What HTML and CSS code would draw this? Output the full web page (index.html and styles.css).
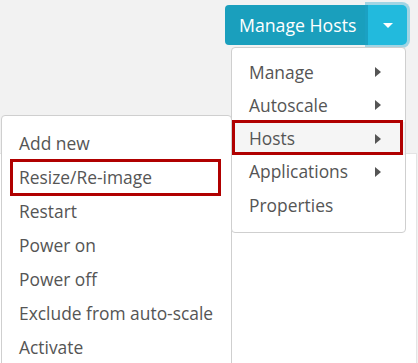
FILE: index.html
```html
<!DOCTYPE html>
<html>
<head>
<meta charset="utf-8">
<link rel="stylesheet" href="styles.css">
</head>
<body>
<div class="page">
  <div class="toolbar">
    <div class="btn-group">
      <button class="btn-main">Manage Hosts</button>
      <button class="btn-caret"><span class="caret"></span></button>
      <ul class="menu menu-main">
        <li class="item has-sub"><span>Manage</span><span class="arrow"></span></li>
        <li class="item has-sub"><span>Autoscale</span><span class="arrow"></span></li>
        <li class="item has-sub active marked"><span>Hosts</span><span class="arrow"></span></li>
        <li class="item has-sub"><span>Applications</span><span class="arrow"></span></li>
        <li class="item"><span>Properties</span></li>
      </ul>
    </div>
  </div>
  <div class="panel"></div>
  <ul class="menu menu-sub">
    <li class="item">Add new</li>
    <li class="item marked">Resize/Re-image</li>
    <li class="item">Restart</li>
    <li class="item">Power on</li>
    <li class="item">Power off</li>
    <li class="item">Exclude from auto-scale</li>
    <li class="item">Activate</li>
  </ul>
</div>
</body>
</html>
```

FILE: styles.css
```css
html, body {
  margin: 0;
  padding: 0;
}
body {
  background: #f2f2f2;
  font-family: "Open Sans", "DejaVu Sans", sans-serif;
  color: #555;
}
.page {
  position: relative;
  width: 418px;
  height: 363px;
  overflow: hidden;
}
.toolbar {
  height: 153px;
  box-sizing: border-box;
  padding: 5px 11px 0 0;
  display: flex;
  justify-content: flex-end;
  align-items: flex-start;
}
.btn-group {
  position: relative;
  display: flex;
  height: 40px;
}
.btn-main, .btn-caret {
  border: none;
  margin: 0;
  font-family: inherit;
  color: #fff;
  height: 40px;
  cursor: pointer;
}
.btn-main {
  background: #1a9fbd;
  font-size: 17.7px;
  padding: 0 10px 0 14px;
  border-radius: 4px 0 0 4px;
  width: 143px;
  text-align: left;
  white-space: nowrap;
}
.btn-caret {
  width: 39px;
  background: #22badd;
  border-radius: 0 5px 5px 0;
  display: flex;
  align-items: center;
  justify-content: center;
  padding: 0;
  box-shadow: 0 0 0 3px rgba(30, 165, 205, 0.38);
  position: relative;
  z-index: 1;
}
.caret {
  width: 0;
  height: 0;
  border-left: 5px solid transparent;
  border-right: 5px solid transparent;
  border-top: 5px solid #fff;
  margin-left: 1px;
}
.panel {
  height: 210px;
  width: 416px;
  background: #fff;
  border-top: 1px solid #e4e4e4;
  border-right: 1px solid #e4e4e4;
}
.menu {
  list-style: none;
  margin: 0;
  position: absolute;
  background: #fff;
  border: 1px solid #cfcfcf;
  box-sizing: border-box;
  font-size: 17.4px;
  white-space: nowrap;
}
.menu-main {
  left: 6px;
  top: 42px;
  width: 175px;
  height: 186px;
  padding: 7.5px 0 0 0;
  border-radius: 4px;
  z-index: 3;
}
.menu-main .item {
  line-height: 33.3px;
  height: 33.3px;
  padding: 0 24px 0 17px;
}
.menu-sub {
  left: 1px;
  top: 115px;
  width: 231px;
  height: 270px;
  padding: 10px 0 0 0;
  border-radius: 4px 4px 0 0;
  z-index: 2;
}
.menu-sub .item {
  line-height: 34px;
  height: 34px;
  padding: 0 0 0 17px;
}
.item {
  position: relative;
}
.has-sub {
  display: flex;
  justify-content: space-between;
  align-items: center;
}
.arrow {
  width: 0;
  height: 0;
  border-top: 5px solid transparent;
  border-bottom: 5px solid transparent;
  border-left: 6px solid #555;
}
.active {
  background: #f5f5f5;
}
.marked::after {
  content: "";
  position: absolute;
  border: 3px solid #b00000;
  pointer-events: none;
}
.menu-main .marked::after {
  left: 0;
  right: 2px;
  top: -2px;
  bottom: 0;
}
.menu-sub .marked::after {
  left: 8px;
  right: 10px;
  top: -1px;
  bottom: -2px;
}
```
